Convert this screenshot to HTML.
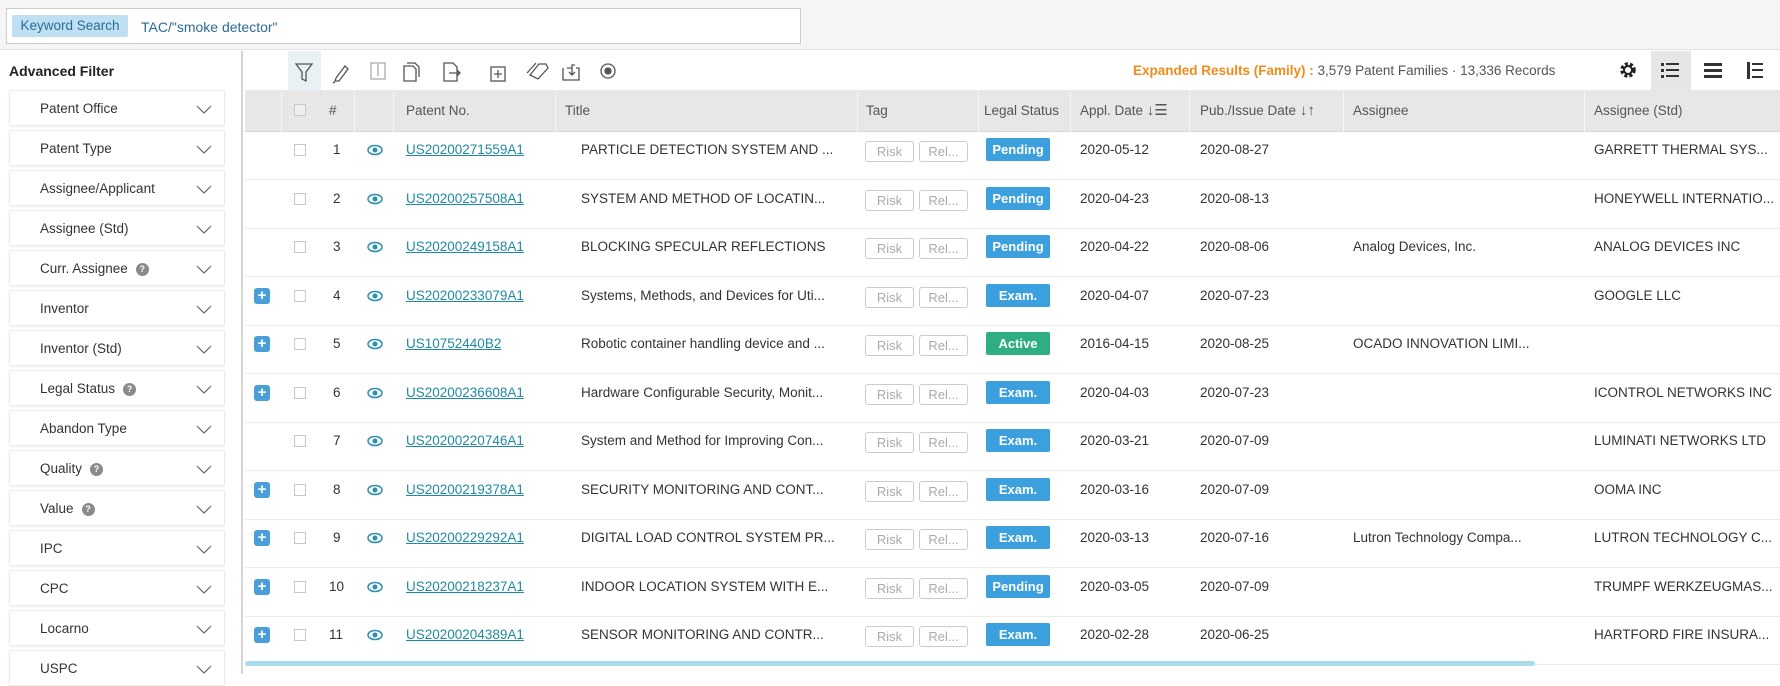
<!DOCTYPE html>
<html><head><meta charset="utf-8">
<style>
*{box-sizing:border-box;margin:0;padding:0}
body{width:1780px;height:674px;overflow:hidden;background:#fff;font-family:"Liberation Sans",Arial,sans-serif;font-size:13.5px;color:#333;position:relative}
.top{position:absolute;left:0;top:0;width:1780px;height:50px;background:#f5f5f5;border-bottom:1px solid #e2e2e2}
.search{position:absolute;left:6px;top:8px;width:795px;height:36px;background:#fff;border:1px solid #ccc}
.chip{position:absolute;left:5px;top:6px;height:22px;width:116px;background:#bfe0f3;color:#2a6b96;line-height:22px;text-align:center;border-radius:2px;font-size:13.5px}
.q{position:absolute;left:134px;top:7px;line-height:22px;color:#2a6b96;font-size:14px}
.side{position:absolute;left:0;top:51px;width:243px;height:623px;border-right:2px solid #d4d4d4;background:#fff}
.af{position:absolute;left:9px;top:12px;font-weight:bold;font-size:14px;color:#222}
.fi{position:absolute;left:9px;width:216px;height:36px;border:1px solid #ececec;border-radius:2px;box-shadow:0 1px 2px rgba(0,0,0,.06);background:#fff}
.fi span{position:absolute;left:30px;top:10px;color:#333}
.fi svg{position:absolute;right:12px;top:14px}
.qm{display:inline-block;width:13px;height:13px;border-radius:50%;background:#8a8a8a;color:#fff;font-size:9px;text-align:center;line-height:13px;margin-left:8px;vertical-align:1px}
.tb{position:absolute;left:245px;top:51px;width:1535px;height:39px;background:#fff}
.hdr{position:absolute;left:245px;top:90px;width:1535px;height:42px;background:#e7e7e7;border-bottom:1px solid #d8d8d8}
.hdr div{position:absolute;top:0;height:42px;line-height:42px;color:#555;font-size:13.5px}
.sep{position:absolute;top:0;width:1px;height:42px;background:#f6f6f6}
.row{position:absolute;left:245px;width:1535px;height:48px;border-bottom:1px solid #ececec}
.row div{position:absolute;top:8px;line-height:20px;white-space:nowrap}
.cb{position:absolute;width:12px;height:12px;border:1px solid #c8c8c8;background:#fff}
.lnk{color:#1f8aa3;text-decoration:underline}
.btn{position:absolute;top:9px!important;height:21px;border:1px solid #ccc;border-radius:3px;color:#aaa;font-size:13px;line-height:19px!important;text-align:center}
.bd{position:absolute;top:6px!important;height:23px;width:64px;border-radius:2px;color:#fff;font-weight:bold;font-size:13px;line-height:23px!important;text-align:center;background:#3ba0dd}
.plus{position:absolute;left:9px;top:10px!important;width:16px;height:16px;border-radius:3px;background:#4a9fd8;color:#fff;font-weight:bold;line-height:16px!important;text-align:center;font-size:15px}
.ic{position:absolute;top:0}
</style></head><body>
<div class="top"><div class="search"><div class="chip">Keyword Search</div><div class="q">TAC/"smoke detector"</div></div></div>

<div class="side" id="side">
<div class="af">Advanced Filter</div>
</div>

<div class="tb">
<div style="position:absolute;left:43px;top:0;width:33px;height:39px;background:#e9f1f5"></div>
<svg class="ic" width="420" height="39" style="left:0" fill="none" stroke="#555" stroke-width="1.3">
<path d="M51 13h16l-6 8v9l-4-2v-7z"/>
<path d="M91 27l9-12 3 3-9 12h-4z M90 31l-2 1"/>
<rect x="126" y="12" width="14" height="16" stroke="#aaa"/><path d="M133 13v12" stroke="#aaa"/>
<path d="M159 15h9l3 3v12h-12z M162 12h8l4 4v10" />
<path d="M199 12h9l4 4v14h-13z M204 22h11 M212 19l3 3-3 3"/>
<rect x="246" y="16" width="14" height="14"/><path d="M253 19v8 M249 23h8"/>
<path d="M285 24l9-11 7 0 2 4-10 11z M282 22l9-10"/>
<path d="M322 17h5v-3h3 M318 17v12h16v-12h-3 M327 15l0 9 M324 21l3 3 3-3"/>
<circle cx="363" cy="20" r="7"/><circle cx="363" cy="20" r="3" fill="#555"/>
</svg>
<div style="position:absolute;left:888px;top:0;line-height:39px;font-size:13.5px;color:#555"><span style="color:#f08c1a;font-weight:bold">Expanded Results (Family) :</span> 3,579 Patent Families · 13,336 Records</div>
<div style="position:absolute;left:1406px;top:0;width:40px;height:39px;background:#e6e6e6"></div>
<svg class="ic" width="1535" height="39" style="left:0;pointer-events:none">
<circle cx="1383" cy="19" r="6" fill="none" stroke="#222" stroke-width="3.5" stroke-dasharray="3 2"/><circle cx="1383" cy="19" r="4" fill="none" stroke="#222" stroke-width="2"/>
<g fill="#333"><rect x="1416" y="12" width="3" height="3"/><rect x="1421" y="12" width="13" height="2"/><rect x="1416" y="18" width="3" height="3"/><rect x="1421" y="18" width="13" height="2"/><rect x="1416" y="24" width="3" height="3"/><rect x="1421" y="24" width="13" height="2"/>
<rect x="1459" y="12" width="18" height="3"/><rect x="1459" y="18" width="18" height="3"/><rect x="1459" y="24" width="18" height="3"/>
<rect x="1502" y="11" width="3" height="17"/><rect x="1507" y="12" width="11" height="2"/><rect x="1507" y="18" width="11" height="2"/><rect x="1507" y="25" width="11" height="2"/></g>
</svg>
</div>

<div class="hdr">
<div class="sep" style="left:36px"></div><div class="sep" style="left:109px"></div><div class="sep" style="left:148px"></div><div class="sep" style="left:310px"></div><div class="sep" style="left:612px"></div><div class="sep" style="left:733px"></div><div class="sep" style="left:825px"></div><div class="sep" style="left:944px"></div><div class="sep" style="left:1098px"></div><div class="sep" style="left:1339px"></div>
<span class="cb" style="left:49px;top:14px;background:#eee"></span>
<div style="left:84px">#</div>
<div style="left:161px">Patent No.</div>
<div style="left:320px">Title</div>
<div style="left:621px">Tag</div>
<div style="left:739px">Legal Status</div>
<div style="left:835px">Appl. Date <span style="font-size:15px">↓☰</span></div>
<div style="left:955px">Pub./Issue Date <span style="font-size:15px">↓↑</span></div>
<div style="left:1108px">Assignee</div>
<div style="left:1349px">Assignee (Std)</div>
</div>

<div id="rows"></div>
<div style="position:absolute;left:245px;top:661px;width:1290px;height:5px;border-radius:3px;background:#a9dbea"></div>

<script>
var f=["Patent Office","Patent Type","Assignee/Applicant","Assignee (Std)","Curr. Assignee?","Inventor","Inventor (Std)","Legal Status?","Abandon Type","Quality?","Value?","IPC","CPC","Locarno","USPC"];
var s="";
f.forEach(function(n,i){var q=n.slice(-1)=="?";if(q)n=n.slice(0,-1);
s+='<div class="fi" style="top:'+(39+i*40)+'px"><span>'+n+(q?'<b class="qm">?</b>':'')+'</span><svg width="16" height="9"><path d="M1 1l7 7 7-7" fill="none" stroke="#666" stroke-width="1.2"/></svg></div>';});
document.getElementById("side").innerHTML+=s;
var d=[
[0,"US20200271559A1","PARTICLE DETECTION SYSTEM AND ...","Pending","2020-05-12","2020-08-27","","GARRETT THERMAL SYS..."],
[0,"US20200257508A1","SYSTEM AND METHOD OF LOCATIN...","Pending","2020-04-23","2020-08-13","","HONEYWELL INTERNATIO..."],
[0,"US20200249158A1","BLOCKING SPECULAR REFLECTIONS","Pending","2020-04-22","2020-08-06","Analog Devices, Inc.","ANALOG DEVICES INC"],
[1,"US20200233079A1","Systems, Methods, and Devices for Uti...","Exam.","2020-04-07","2020-07-23","","GOOGLE LLC"],
[1,"US10752440B2","Robotic container handling device and ...","Active","2016-04-15","2020-08-25","OCADO INNOVATION LIMI...",""],
[1,"US20200236608A1","Hardware Configurable Security, Monit...","Exam.","2020-04-03","2020-07-23","","ICONTROL NETWORKS INC"],
[0,"US20200220746A1","System and Method for Improving Con...","Exam.","2020-03-21","2020-07-09","","LUMINATI NETWORKS LTD"],
[1,"US20200219378A1","SECURITY MONITORING AND CONT...","Exam.","2020-03-16","2020-07-09","","OOMA INC"],
[1,"US20200229292A1","DIGITAL LOAD CONTROL SYSTEM PR...","Exam.","2020-03-13","2020-07-16","Lutron Technology Compa...","LUTRON TECHNOLOGY C..."],
[1,"US20200218237A1","INDOOR LOCATION SYSTEM WITH E...","Pending","2020-03-05","2020-07-09","","TRUMPF WERKZEUGMAS..."],
[1,"US20200204389A1","SENSOR MONITORING AND CONTR...","Exam.","2020-02-28","2020-06-25","","HARTFORD FIRE INSURA..."]];
var h="";
d.forEach(function(r,i){
var t=132+i*48.5;
h+='<div class="row" style="top:'+t+'px">'+(r[0]?'<div class="plus">+</div>':'')+
'<span class="cb" style="left:49px;top:12px"></span>'+
'<div style="left:'+(i>8?84:88)+'px">'+(i+1)+'</div>'+
'<div style="left:122px;top:9px"><svg width="16" height="16"><ellipse cx="8" cy="9" rx="7" ry="4.5" fill="none" stroke="#2a8fb0" stroke-width="1.5"/><circle cx="8" cy="9" r="2.5" fill="#2a8fb0"/></svg></div>'+
'<div class="lnk" style="left:161px">'+r[1]+'</div>'+
'<div style="left:336px">'+r[2]+'</div>'+
'<div class="btn" style="left:620px;width:49px">Risk</div><div class="btn" style="left:674px;width:49px">Rel...</div>'+
'<div class="bd" style="left:741px;background:'+(r[3]=="Active"?"#2fae84":"#3ba0dd")+'">'+r[3]+'</div>'+
'<div style="left:835px">'+r[4]+'</div><div style="left:955px">'+r[5]+'</div>'+
'<div style="left:1108px">'+r[6]+'</div><div style="left:1349px">'+r[7]+'</div></div>';
});
document.getElementById("rows").innerHTML=h;
</script>
</body></html>
